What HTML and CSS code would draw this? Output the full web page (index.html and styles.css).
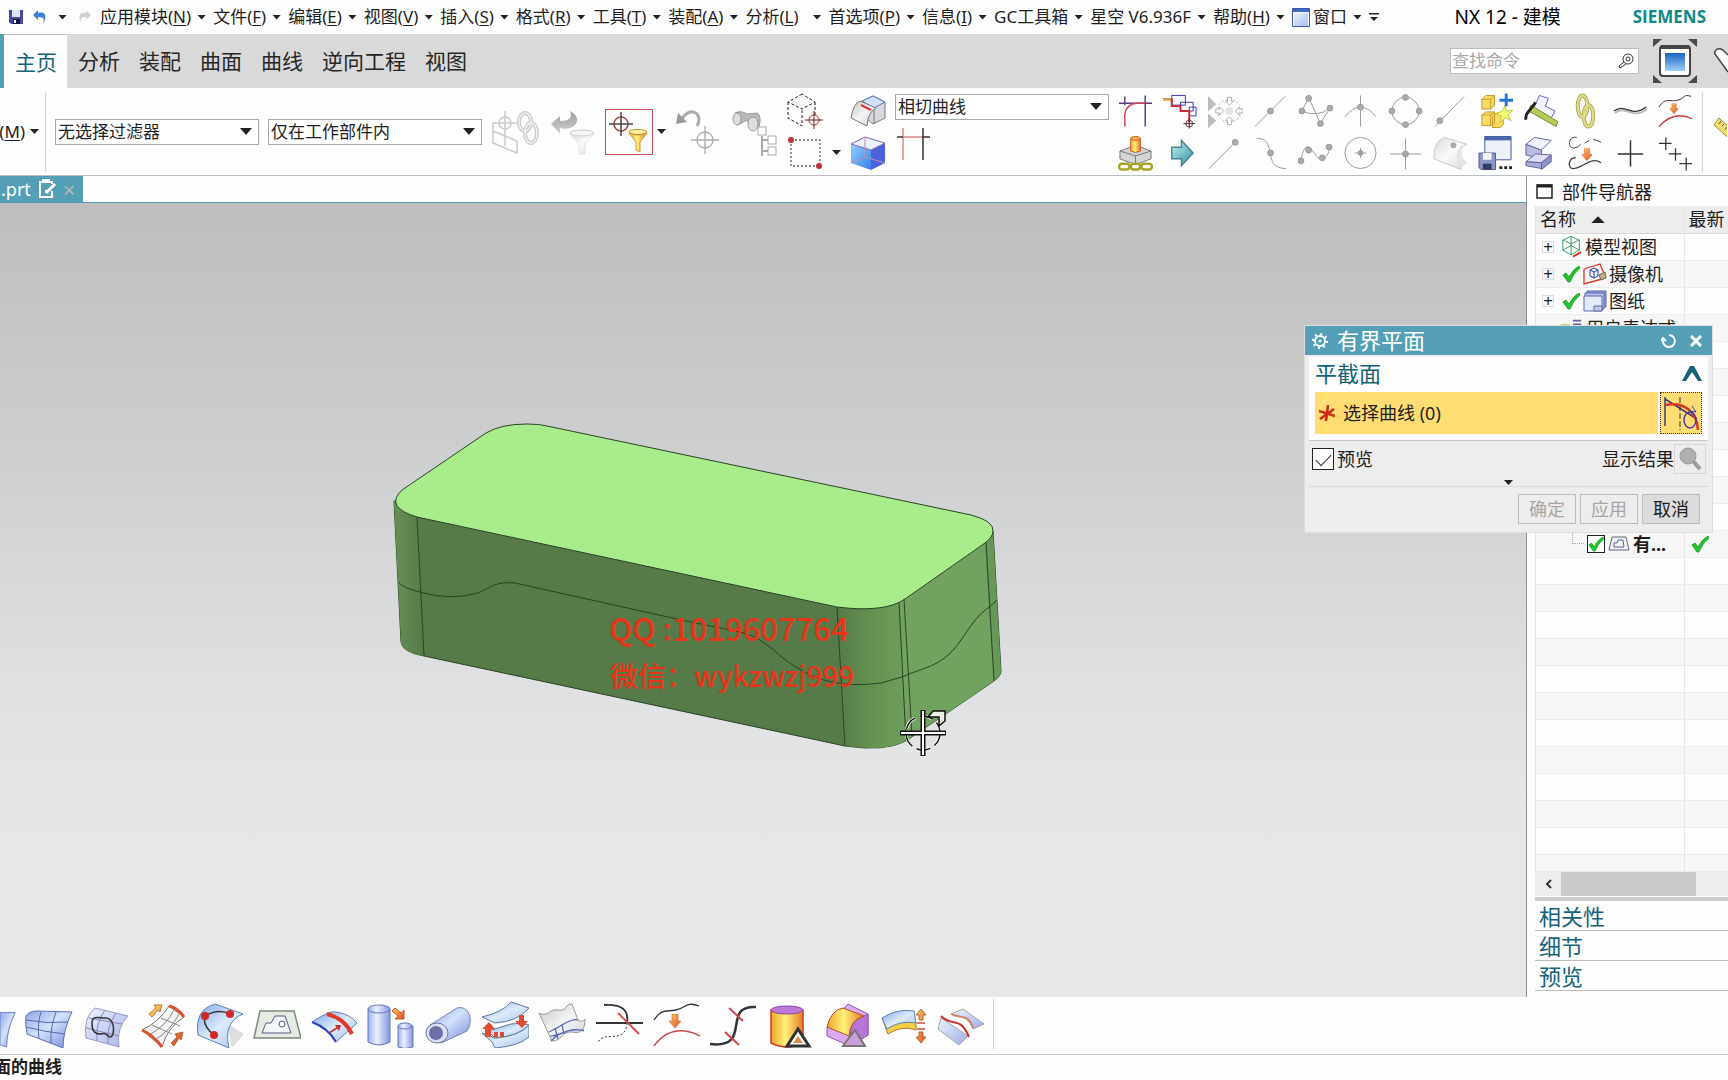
FILE: index.html
```html
<!DOCTYPE html>
<html lang="zh-CN">
<head>
<meta charset="utf-8">
<title>NX 12 - 建模</title>
<link rel="stylesheet" href="styles.css">
</head>
<body>
<svg class="defs" aria-hidden="true">
  <defs>
    <linearGradient id="blue" x1="0" y1="0" x2="1" y2="1"><stop offset="0" stop-color="#e8effd"/><stop offset="1" stop-color="#7f93e0"/></linearGradient>
    <linearGradient id="mesh" x1="0" y1="0" x2="1" y2="1"><stop offset="0" stop-color="#8fa5ea"/><stop offset=".45" stop-color="#d3e2fb"/><stop offset="1" stop-color="#7486da"/></linearGradient>
    <linearGradient id="blueH" x1="0" y1="0" x2="1" y2="0"><stop offset="0" stop-color="#9db0ea"/><stop offset=".4" stop-color="#eaf1ff"/><stop offset="1" stop-color="#8496df"/></linearGradient>
    <linearGradient id="sky" x1="0" y1="0" x2="1" y2="1"><stop offset="0" stop-color="#7fa6e8"/><stop offset=".5" stop-color="#dceafa"/><stop offset="1" stop-color="#a9c4ec"/></linearGradient>
    <linearGradient id="grey" x1="0" y1="0" x2="1" y2="1"><stop offset="0" stop-color="#c4c4c4"/><stop offset=".5" stop-color="#f4f4f4"/><stop offset="1" stop-color="#cfcfcf"/></linearGradient>
    <linearGradient id="pale" x1="0" y1="0" x2="1" y2="1"><stop offset="0" stop-color="#dcdcdc"/><stop offset=".5" stop-color="#fafafa"/><stop offset="1" stop-color="#d8d8d8"/></linearGradient>
    <linearGradient id="dark" x1="0" y1="0" x2="0" y2="1"><stop offset="0" stop-color="#9a9a9a"/><stop offset="1" stop-color="#d2d2d2"/></linearGradient>
    <linearGradient id="gold" x1="0" y1="0" x2="1" y2="0"><stop offset="0" stop-color="#f0a52c"/><stop offset=".45" stop-color="#fff27a"/><stop offset="1" stop-color="#e77a28"/></linearGradient>
    <linearGradient id="fire" x1="0" y1="0" x2="1" y2="1"><stop offset="0" stop-color="#ffd25a"/><stop offset="1" stop-color="#e0482a"/></linearGradient>
    <linearGradient id="cube" x1="0" y1="0" x2="1" y2="1"><stop offset="0" stop-color="#8fd0fb"/><stop offset="1" stop-color="#3b7fe8"/></linearGradient>
    <linearGradient id="teal" x1="0" y1="0" x2="1" y2="1"><stop offset="0" stop-color="#c2f0f0"/><stop offset="1" stop-color="#2f93a5"/></linearGradient>
    <linearGradient id="screen" x1="0" y1="0" x2="0" y2="1"><stop offset="0" stop-color="#1d62c4"/><stop offset="1" stop-color="#9ed0fa"/></linearGradient>
    <symbol id="tick" viewBox="0 0 18 18"><path d="M1 10 4 8 7 12Q11 4 17 1L18 3Q11 9 8 17H6Z" fill="#22c52e" stroke="#169a24" stroke-width=".8"/></symbol>
    <symbol id="down" viewBox="0 0 12 14"><path d="M3 0H9V7H12L6 14 0 7H3Z" fill="url(#fire)" stroke="#d85a30" stroke-width=".6"/></symbol>
  </defs>
</svg>

<header class="menubar">
  <div class="quick">
    <button aria-label="保存"><svg width="14" height="14" viewBox="0 0 14 14"><path d="M0 0H14V14H2L0 12Z" fill="#4a4a9c"/><path d="M3 0H11V7H3Z" fill="#dfe4f7"/><path d="M4 9H11V14H4Z" fill="#16163c"/><path d="M5 10H7V13H5Z" fill="#fff"/></svg></button>
    <button aria-label="撤消"><svg width="15" height="14" viewBox="0 0 15 14"><path d="M0 5 5 0V3C12 1 15 6 10 14 12 8 10 7 5 7V10Z" fill="#3f7fdc"/></svg></button>
    <i class="caret"></i>
    <button aria-label="重做"><svg width="14" height="14" viewBox="0 0 15 14"><path d="M15 5 10 0V3C3 1 0 6 5 14 3 8 5 7 10 7V10Z" fill="#d0d0d0"/></svg></button>
  </div>
  <nav class="menus">
    <button>应用模块(<u>N</u>)<i class="caret"></i></button>
    <button>文件(<u>F</u>)<i class="caret"></i></button>
    <button>编辑(<u>E</u>)<i class="caret"></i></button>
    <button>视图(<u>V</u>)<i class="caret"></i></button>
    <button>插入(<u>S</u>)<i class="caret"></i></button>
    <button>格式(<u>R</u>)<i class="caret"></i></button>
    <button>工具(<u>T</u>)<i class="caret"></i></button>
    <button>装配(<u>A</u>)<i class="caret"></i></button>
    <button class="wide">分析(<u>L</u>)<i class="caret"></i></button>
    <button>首选项(<u>P</u>)<i class="caret"></i></button>
    <button>信息(<u>I</u>)<i class="caret"></i></button>
    <button>GC工具箱<i class="caret"></i></button>
    <button>星空 V6.936F<i class="caret"></i></button>
    <button>帮助(<u>H</u>)<i class="caret"></i></button>
    <button><svg class="win" width="18" height="19" viewBox="0 0 18 19"><path d="M.5.5H17.5V18.5H.5Z" fill="#f4f8ff" stroke="#3a58a8"/><path d="M1 1H17V4H1Z" fill="#3f68c8"/><path d="M2 5H16V18H2Z" fill="url(#blue)" opacity=".6"/></svg>窗口<i class="caret"></i></button>
    <button aria-label="更多"><svg width="10" height="9" viewBox="0 0 10 9"><path d="M0 0H10V1.500H0ZM1 4H9L5 8Z" fill="#222"/></svg></button>
  </nav>
  <h1 class="app">NX 12 - 建模</h1>
  <strong class="brand">SIEMENS</strong>
</header>

<div class="tabbar">
  <nav class="tabs">
    <a class="active" href="#home">主页</a><a href="#analysis">分析</a><a href="#assembly">装配</a><a href="#surface">曲面</a><a href="#curve">曲线</a><a href="#reverse">逆向工程</a><a href="#view">视图</a>
  </nav>
  <div class="tools">
    <label class="search"><input type="text" placeholder="查找命令" aria-label="查找命令"><svg width="16" height="16" viewBox="0 0 16 16" fill="none" stroke="#333"><circle cx="10" cy="6" r="5"/><circle cx="10" cy="6" r="2"/><path d="M6 9 1 13 2 15 8 11"/></svg></label>
    <button aria-label="全屏"><svg width="44" height="44" viewBox="0 0 44 44"><path d="M0 0H9L0 8ZM44 0H35L44 8ZM0 44H9L0 36ZM44 44H35L44 36Z" fill="#4a4a4a"/><rect x="7" y="7" width="30" height="30" rx="3" fill="#fff" stroke="#444" stroke-width="2"/><path d="M8 8H36" stroke="#444" stroke-width="4"/><path d="M12 14H32V32H12Z" fill="url(#screen)"/></svg></button>
    <svg class="clipped" width="15" height="30" viewBox="0 0 15 30"><path d="M15 9 10 4C5 1 1 4 2 8L15 26" fill="#fff" stroke="#444" stroke-width="1.500"/></svg>
  </div>
</div>

<section class="ribbon">
  <button class="menu-m"><span>(<u>M</u>)</span><i class="caret"></i></button>
  <label class="pick filter"><select aria-label="选择过滤器"><option>无选择过滤器</option></select><i class="caret big"></i></label>
  <label class="pick scope"><select aria-label="选择范围"><option>仅在工作部件内</option></select><i class="caret big"></i></label>
  <button aria-label="关联选择"><svg width="48" height="48" viewBox="0 0 48 48" fill="none" stroke="#c9c9c9" stroke-width="1.500"><circle cx="14" cy="15" r="6"/><path d="M14 3V38M2 15H30M2 15V35L26 45V33L2 23"/><ellipse cx="34" cy="14" rx="6" ry="9" stroke-width="4"/><ellipse cx="40" cy="25" rx="6" ry="10" stroke-width="4"/><ellipse cx="34" cy="14" rx="6" ry="9" stroke="#f2f2f2"/><ellipse cx="40" cy="25" rx="6" ry="10" stroke="#f2f2f2"/></svg></button>
  <button aria-label="重置过滤器"><svg width="48" height="48" viewBox="0 0 48 48"><path d="M3 16 12 8V13Q26 13 22 3 34 10 26 18 20 22 12 20V26Z" fill="url(#dark)"/><ellipse cx="34" cy="25" rx="12" ry="3" fill="#f4f4f4" stroke="#ccc"/><path d="M22 26 31 36V46H37V36L46 26Q34 31 22 26Z" fill="url(#pale)" stroke="#d8d8d8" stroke-width=".6"/></svg></button>
  <div class="split">
    <button class="on" aria-label="类型过滤器"><svg width="44" height="44" viewBox="0 0 44 44"><g fill="none" stroke="#a84848" stroke-width="1.500"><circle cx="14" cy="14" r="7"/><path d="M14 2V26M2 14H26" stroke="#444"/></g><ellipse cx="31" cy="22" rx="9" ry="2.500" fill="#fff2a8" stroke="#c59020"/><path d="M22 23 29 32V40L33 42V32L40 23Q31 27 22 23Z" fill="url(#gold)" stroke="#bf8b20" stroke-width=".8"/></svg></button>
    <i class="caret"></i>
  </div>
  <button aria-label="返回"><svg width="46" height="48" viewBox="0 0 46 48" fill="none"><path d="M5 13Q15-1 22 6 26 11 22 18" stroke="#aaa" stroke-width="3"/><path d="M1 16 3 5 12 14Z" fill="#999"/><g stroke="#aaa" stroke-width="1.300"><circle cx="30" cy="32" r="8"/><path d="M30 18V46M16 32H44"/></g></svg></button>
  <button aria-label="在导航器中查找"><svg width="48" height="48" viewBox="0 0 48 48" stroke="#999"><path d="M5 5Q11 2 17 6L27 5Q32 8 29 19L22 22 17 12 8 17Z" fill="#b9b9b9"/><ellipse cx="7" cy="11" rx="4" ry="6" fill="#ddd"/><ellipse cx="23" cy="16" rx="5" ry="7" fill="#ddd"/><g fill="#fff" stroke="#aaa"><path d="M32 28V48M32 32H40M32 43H40" stroke-width="2"/><rect x="28" y="19" width="8" height="8"/><rect x="38" y="28" width="8" height="8"/><rect x="38" y="39" width="8" height="8"/></g></svg></button>
  <div class="stack stack-a">
    <button aria-label="选择体"><svg width="36" height="36" viewBox="0 0 36 36" fill="none" stroke="#222"><path d="M15 1 1 9 15 16 28 9ZM1 9V25L15 33V16M28 9V22" stroke-dasharray="3 2"/><circle cx="27" cy="27" r="5" stroke="#a33"/><path d="M27 18V36M18 27H36" stroke="#622"/></svg></button>
    <div class="split"><button aria-label="矩形选择"><svg width="36" height="36" viewBox="0 0 36 36"><path d="M4 5H33V31H4Z" fill="none" stroke="#666" stroke-width="1.400" stroke-dasharray="2 2"/><circle cx="4" cy="5" r="3" fill="#c23038"/><circle cx="32" cy="31" r="3" fill="#c23038"/></svg></button><i class="caret"></i></div>
  </div>
  <div class="stack">
    <button aria-label="面规则"><svg width="36" height="36" viewBox="0 0 36 36" stroke="#777"><path d="M10 9 23 3 35 9V25L23 31 17 26Z" fill="#d5d8dd"/><path d="M12 8 23 3 35 9 24 15Z" fill="#cfe2fa" stroke="#5878b8"/><path d="M24 15V30" fill="none"/><path d="M1 25Q3 11 10 8L26 15Q18 19 17 33Z" fill="url(#grey)"/><path d="M11 12 21 17" stroke="#d33" stroke-width="2"/></svg></button>
    <button aria-label="实体"><svg width="36" height="36" viewBox="0 0 36 36"><path d="M1 9 21 15V35L1 28Z" fill="url(#cube)"/><path d="M21 15 35 8V28L21 35Z" fill="#4c62dc"/><path d="M1 9 15 2 35 8 21 15Z" fill="#e5f2fc" stroke="#86a"/><path d="M15 2V22L35 28M1 28 15 22" fill="none" stroke="#c48ab0"/></svg></button>
  </div>
  <div class="stack stack-c">
    <label class="pick rule"><select aria-label="曲线规则"><option>相切曲线</option></select><i class="caret big"></i></label>
    <button aria-label="在相交处停止"><svg width="36" height="36" viewBox="0 0 36 36" fill="none"><path d="M8 1V33M8 10H27" stroke="#d88" stroke-width="1.500"/><path d="M28 1V33M27 10H35M2 10H8" stroke="#333" stroke-width="1.500"/></svg></button>
  </div>
  <div class="commands">
    <button aria-label="跟随圆角"><svg viewBox="0 0 36 36" fill="none"><path d="M7 12V3M28 2V34M1 10H35" stroke="#5a3c7a" stroke-width="1.500"/><path d="M7 34V22Q8 11 19 10H28" stroke="#d44050" stroke-width="1.500"/></svg></button>
    <button aria-label="曲线链"><svg viewBox="0 0 36 36" fill="none"><path d="M9 2H23V12H9ZM18 9H31V18H18ZM27 14H34V23H27Z" stroke="#3838a8"/><path d="M0 6H9V13H18V18H27V30" stroke="#c82838" stroke-width="2"/><path d="M0 6H8" stroke="#e8a030" stroke-width="2"/><circle cx="27" cy="31" r="3.500" stroke="#733"/><path d="M27 25V36M21 31H33" stroke="#333"/></svg></button>
    <button aria-label="移动"><svg viewBox="0 0 36 36" fill="#fff" stroke="#aaa"><path d="M0 3 8 11 0 18ZM0 21 8 28 0 35Z" fill="#bbb" stroke="#bbb"/><circle cx="22" cy="18" r="12" fill="none" stroke-dasharray="2 2"/><circle cx="22" cy="18" r="4" fill="#e4e4e4" stroke="none"/><path d="M22 12 26 8H24V4H20V8H18ZM22 24 26 28H24V32H20V28H18ZM16 18 12 14V16H8V20H12V22ZM28 18 32 14V16H36V20H32V22Z"/></svg></button>
    <button aria-label="中点"><svg viewBox="0 0 36 36" fill="#aaa" stroke="#999"><path d="M2 34 33 3"/><circle cx="18" cy="18" r="3"/></svg></button>
    <button aria-label="极点"><svg viewBox="0 0 36 36" fill="#aaa" stroke="#999"><path d="M4 18 11 4 23 31 33 15Q20 25 4 18" fill="none"/><circle cx="4" cy="18" r="3"/><circle cx="11" cy="5" r="3"/><circle cx="23" cy="31" r="3"/><circle cx="33" cy="15" r="3"/></svg></button>
    <button aria-label="交点"><svg viewBox="0 0 36 36" fill="#aaa" stroke="#999"><path d="M18 2V34M2 24Q18 4 34 24" fill="none"/><circle cx="18" cy="14" r="3"/></svg></button>
    <button aria-label="象限点"><svg viewBox="0 0 36 36" fill="#aaa" stroke="#999"><circle cx="18" cy="18" r="14" fill="none"/><circle cx="18" cy="4" r="3"/><circle cx="18" cy="32" r="3"/><circle cx="4" cy="18" r="3"/><circle cx="32" cy="18" r="3"/></svg></button>
    <button aria-label="线上点"><svg viewBox="0 0 36 36" fill="#aaa" stroke="#999"><path d="M2 34 32 3"/><circle cx="7" cy="28" r="3"/></svg></button>
    <button aria-label="新建组件"><svg viewBox="0 0 36 36"><g fill="#f8dc62" stroke="#c49a28"><path d="M4 6 8 2H17V12L13 16H4ZM4 22 8 19H17V30L13 33H4ZM15 24 19 20H26V32L23 35H15Z"/><path d="M4 6H13V16M13 6 17 2M4 22H13V33M13 22 17 19" fill="none"/></g><path d="M28 12 29 18 36 17 31 22 34 28 28 25 23 30 24 23 18 21 25 18Z" fill="#f2fa70" stroke="#a8b83a" stroke-width=".7"/><path d="M29 0V13M22 7H36" stroke="#2878d8" stroke-width="3"/></svg></button>
    <button aria-label="草图"><svg viewBox="0 0 36 36"><path d="M17 2 26 5 23 13 33 18 28 27 10 17Z" fill="#f3f2ff" stroke="#6262c8"/><path d="M8 12 36 29 34 34 6 18Z" fill="#b7cc58" stroke="#6d8f38"/><path d="M13 9 7 17Q2 22 3 27" stroke="#222" stroke-width="3" fill="none"/></svg></button>
    <button aria-label="链接"><svg viewBox="0 0 36 36" fill="none"><g stroke="#a09e48" stroke-width="4"><ellipse cx="15" cy="13" rx="5" ry="11"/><ellipse cx="21" cy="23" rx="5" ry="11"/></g><g stroke="#dedc88" stroke-width="2.500"><ellipse cx="15" cy="13" rx="5" ry="11"/><ellipse cx="21" cy="23" rx="5" ry="11"/></g></svg></button>
    <button aria-label="样条"><svg viewBox="0 0 36 36" fill="none"><path d="M2 20C14 11 20 28 35 16" stroke="#bbb" stroke-width="2"/><path d="M1 18C13 9 19 26 34 14" stroke="#333" stroke-width="1.300"/></svg></button>
    <button aria-label="投影曲线"><svg viewBox="0 0 36 36" fill="none"><path d="M1 14C8 3 12 9 20 7S26 0 34 3" stroke="#333"/><path d="M1 34Q16 17 35 26" stroke="#c83838" stroke-width="1.300"/><use href="#down" x="12" y="10" width="9" height="11"/></svg></button>

    <button aria-label="关联"><svg viewBox="0 0 36 36"><path d="M2 16 18 10 34 16V24L18 30 2 24Z" fill="#d4d4d4" stroke="#777"/><path d="M2 16 18 21 34 16M18 21V30" fill="none" stroke="#777"/><path d="M13 3V16Q18 19 23 16V3Z" fill="url(#gold)" stroke="#c85a20"/><ellipse cx="18" cy="3" rx="5" ry="2" fill="#fbb45a" stroke="#c85a20"/><g fill="none" stroke="#a8a428" stroke-width="2.500"><rect x="1" y="29" width="11" height="6" rx="3"/><rect x="13" y="29" width="10" height="6" rx="3"/><rect x="24" y="29" width="11" height="6" rx="3"/></g></svg></button>
    <button aria-label="下一步"><svg viewBox="0 0 36 36"><path d="M9 12H19V5L31 18 19 31V24H9Z" fill="url(#teal)" stroke="#4a8390" stroke-width="1.500"/></svg></button>
    <button aria-label="端点"><svg viewBox="0 0 36 36" fill="#aaa" stroke="#999"><path d="M1 34 27 8"/><circle cx="28" cy="7" r="3"/></svg></button>
    <button aria-label="拐点"><svg viewBox="0 0 36 36" fill="#aaa" stroke="#999"><path d="M4 3C26 2 8 34 34 34" fill="none"/><circle cx="18" cy="18" r="3"/></svg></button>
    <button aria-label="控制点"><svg viewBox="0 0 36 36" fill="#aaa" stroke="#999"><path d="M3 26C7 2 14 14 18 20S30 26 33 12" fill="none"/><circle cx="3" cy="26" r="3"/><circle cx="11" cy="15" r="3"/><circle cx="25" cy="23" r="3"/><circle cx="32" cy="12" r="3"/></svg></button>
    <button aria-label="圆心"><svg viewBox="0 0 36 36" fill="#aaa" stroke="#999"><circle cx="18" cy="18" r="16" fill="none"/><circle cx="18" cy="18" r="2.500"/><path d="M18 13V23M12 18H24"/></svg></button>
    <button aria-label="现有点"><svg viewBox="0 0 36 36" fill="#aaa" stroke="#999"><path d="M18 3V35M2 19H34"/><circle cx="18" cy="19" r="3"/></svg></button>
    <button aria-label="面上的点"><svg viewBox="0 0 36 36"><path d="M1 24Q0 6 12 2L35 9Q20 13 29 35Z" fill="url(#pale)" stroke="#c8c8c8"/><path d="M35 9Q24 18 35 28L29 34Q20 17 35 9Z" fill="#e6e6e6"/><circle cx="21" cy="10" r="3" fill="#aaa"/></svg></button>
    <button aria-label="另存为"><svg viewBox="0 0 36 36"><path d="M7 1H34V25H7Z" fill="#eef1fa" stroke="#35589e"/><path d="M7 1H34V5H7Z" fill="#4868a8"/><path d="M1 18H18V35H3L1 33Z" fill="#8b98c8" stroke="#4e5c90"/><path d="M5 18H14V25H5Z" fill="#f3f3f3"/><path d="M5 29H14V35H5Z" fill="#333d60"/><path d="M22 33H25M27 33H30M32 33H35" stroke="#222" stroke-width="3"/></svg></button>
    <button aria-label="基准平面"><svg viewBox="0 0 36 36"><g stroke="#63639e"><path d="M3 9 19 15V24L3 20Z" fill="#b9bbe0"/><path d="M3 9 12 2 29 5 19 15Z" fill="#f0f0ff"/><path d="M3 27 13 19 29 20 19 28Z" fill="#dedff7"/><path d="M3 27 19 28V34L3 31Z" fill="#a8acd8"/><path d="M19 28 29 20V27L19 35Z" fill="#8e92c8"/></g></svg></button>
    <button aria-label="偏置曲线"><svg viewBox="0 0 36 36" fill="none" stroke="#444"><path d="M9 2C0 0-1 13 6 13Q10 13 13 9M17 8 22 5M26 4Q30 5 34 7"/><path d="M8 23C0 22-1 35 6 34 16 33 24 21 34 28" stroke-width="1.400"/><use href="#down" x="14" y="13" width="11" height="13"/></svg></button>
    <button aria-label="点"><svg viewBox="0 0 36 36"><path d="M18 5V32M5 19H31" stroke="#333" stroke-width="1.500"/></svg></button>
    <button aria-label="点集"><svg viewBox="0 0 36 36"><path d="M8 2V15M1 8H14M18 13V26M11 19H24M29 23V36M22 29H35" stroke="#333" stroke-width="1.300"/></svg></button>
  </div>
  <div class="measure"><svg width="16" height="48" viewBox="0 0 16 48"><path d="M3 17 8 10 30 30 24 36Z" fill="#f3df75" stroke="#a08838"/><path d="M8 16 10 13M11 18 13 16M14 22 16 19" stroke="#555"/></svg></div>
</section>

<main class="work">
  <section class="stage">
    <div class="docs">
      <button class="doc">.prt<svg width="18" height="20" viewBox="0 0 18 20" fill="none" stroke="#fff" stroke-width="2"><path d="M14 12V18H2V3H14V5M5 3V1H11V3"/><path d="M8 14 17 5M8 14 9 11" stroke-width="3"/></svg><span class="x">×</span></button>
    </div>
    <div class="viewport">
      <svg viewBox="0 203 1526 794" preserveAspectRatio="xMidYMid meet">
        <defs>
          <linearGradient id="corner" x1="837" y1="0" x2="906" y2="0" gradientUnits="userSpaceOnUse"><stop offset="0" stop-color="#567a48"/><stop offset=".5" stop-color="#659150"/><stop offset="1" stop-color="#6f9f5d"/></linearGradient>
          <linearGradient id="left" x1="394" y1="0" x2="424" y2="0" gradientUnits="userSpaceOnUse"><stop offset="0" stop-color="#669056"/><stop offset="1" stop-color="#567a48"/></linearGradient>
        </defs>
        <g stroke="#2c4424" stroke-width="1">
          <path d="M394 501 401 642Q402 652 424 656L845 746Q885 752 906 741L994 681Q1001 676 1001 671L993 531Z" fill="#567a48"/>
          <path d="M394 501 401 642Q402 652 424 656L417 517Z" fill="url(#left)" stroke="none"/>
          <path d="M837 607 845 746Q885 752 906 741L899 600Z" fill="url(#corner)" stroke="none"/>
          <path d="M899 598 906 741 994 681 985 542Z" fill="#72a25f" stroke="none"/>
          <path d="M985 542 994 681Q1001 676 1001 671L993 531Z" fill="#699659" stroke="none"/>
          <path d="M402 490 486 433Q501 424 527 424 540 424 547 426L971 515Q994 521 993 531 993 537 985 543L905 599Q885 613 837 607L417 517Q384 507 402 490Z" fill="#a9ec8c"/>
          <path d="M417 517 424 656M837 607 845 746M899 602 906 741M904 599 912 736M986 542 994 681" fill="none"/>
          <path d="M398 582C404 588 412 590 420 592Q450 601 478 593C490 588 495 581 515 583L686 621 735 631C765 636 775 655 796 667Q830 690 881 683L902 677C925 667 930 669 947 656 963 643 970 620 988 608Q992 605 997 600" fill="none"/>
        </g>
        <g class="watermark">
          <text class="qq" x="609" y="641">QQ :1019607764</text>
          <text x="610" y="687">微信：wykzwzj999</text>
        </g>
        <g fill="none">
          <circle cx="923" cy="733" r="17" stroke="#fff" stroke-width="3" stroke-dasharray="14 5"/>
          <circle cx="923" cy="733" r="17" stroke="#111" stroke-width="1.500" stroke-dasharray="14 5"/>
          <path d="M923 710V756M900 733H946" stroke="#111" stroke-width="5"/>
          <path d="M923 711V755M901 733H945" stroke="#fff" stroke-width="2"/>
          <path d="M928 717 933 711H945V721L939 726V717Z" fill="#e8efe4" stroke="#111" stroke-width="1.500"/>
        </g>
      </svg>
    </div>
  </section>

  <aside class="navigator">
    <h2><svg width="17" height="15" viewBox="0 0 17 15"><path d="M1 1H16V14H1Z" fill="none" stroke="#222" stroke-width="1.500"/><path d="M1 2H16" stroke="#222" stroke-width="3"/></svg>部件导航器</h2>
    <div class="tree">
      <table>
        <colgroup><col class="c-name"><col></colgroup>
        <thead><tr><th>名称<i class="sort"></i></th><th>最新</th></tr></thead>
        <tbody>
          <tr><td><div class="node"><span class="plus">+</span><svg width="22" height="23" viewBox="0 0 24 24" fill="none" stroke="#2a9a5c"><path d="M2 5 11 1 20 5V16L11 21 2 16ZM2 5 11 9 20 5M11 1V21M2 16 11 11 20 16"/><path d="M13 23 22 18" stroke="#e02818" stroke-width="2"/></svg>模型视图</div></td><td></td></tr>
          <tr><td><div class="node"><span class="plus">+</span><svg class="chk" width="18" height="18"><use href="#tick"/></svg><svg width="24" height="22" viewBox="0 0 24 22" fill="none"><path d="M1 6 17 1 22 13M1 6V21L19 16" stroke="#d83828" stroke-width="1.300"/><path d="M7 7 11 5 15 7V13L11 15 7 13ZM7 7 11 9 15 7M11 9V15" stroke="#2838a8"/><path d="M16 12 22 9 23 15 18 17Z" fill="#c8b080" stroke="#665"/></svg>摄像机</div></td><td></td></tr>
          <tr><td><div class="node"><span class="plus">+</span><svg class="chk" width="18" height="18"><use href="#tick"/></svg><svg width="24" height="22" viewBox="0 0 24 22" stroke="#5868a8"><path d="M4 1H23V17H4Z" fill="#93a3d8"/><path d="M2 3H21V19H2Z" fill="#b8c4ee"/><path d="M1 6H19V21H1Z" fill="#e4eafb"/><path d="M11 16H19V21H11Z" fill="#c4cae0"/></svg>图纸</div></td><td></td></tr>
          <tr><td><div class="node"><span class="plus none"></span><svg width="23" height="22" viewBox="0 0 25 22" fill="none"><path d="M1 20V8H9L11 11H17V20Z" stroke="#d0b020" stroke-width="2"/><path d="M13 3H22M13 7H22" stroke="#6a5aa8" stroke-width="2"/></svg>用户表达式</div></td><td></td></tr>
          <tr><td></td><td></td></tr><tr><td></td><td></td></tr><tr><td></td><td></td></tr><tr><td></td><td></td></tr><tr><td></td><td></td></tr><tr><td></td><td></td></tr><tr><td></td><td></td></tr>
          <tr><td><div class="node leaf"><span class="twig"></span><span class="box"><svg width="16" height="16"><use href="#tick"/></svg></span><svg width="22" height="15" viewBox="0 0 22 15" fill="#f0f4f0" stroke="#667"><path d="M4 1H18L21 14H1Z"/><path d="M6 11V7H9L10 4H15L16 11Z" stroke="#5560a8"/></svg><b>有...</b></div></td><td><svg class="late" width="18" height="18"><use href="#tick"/></svg></td></tr>
          <tr><td></td><td></td></tr><tr><td></td><td></td></tr><tr><td></td><td></td></tr><tr><td></td><td></td></tr><tr><td></td><td></td></tr><tr><td></td><td></td></tr><tr><td></td><td></td></tr><tr><td></td><td></td></tr><tr><td></td><td></td></tr><tr><td></td><td></td></tr><tr><td></td><td></td></tr><tr><td></td><td></td></tr>
        </tbody>
      </table>
    </div>
    <div class="hscroll"><button aria-label="向左滚动"><svg width="7" height="10" viewBox="0 0 7 10"><path d="M6 1 2 5 6 9" fill="none" stroke="#333" stroke-width="2"/></svg></button><span class="thumb"></span></div>
    <div class="panels"><button>相关性</button><button>细节</button><button>预览</button></div>
  </aside>

  <form class="dialog" aria-label="有界平面">
    <header>
      <svg width="16" height="16" viewBox="0 0 16 16" fill="none" stroke="#fff"><circle cx="8" cy="8" r="5" stroke-width="2"/><circle cx="8" cy="8" r="7" stroke-width="2" stroke-dasharray="2 3.500"/><circle cx="8" cy="8" r="1" fill="#fff"/></svg>
      <h3>有界平面</h3>
      <button type="button" aria-label="重置"><svg width="15" height="15" viewBox="0 0 15 15" fill="none" stroke="#fff" stroke-width="2"><path d="M8 2A6 6 0 1 1 2 7"/><path d="M0 8 2 5 5 8"/></svg></button>
      <button type="button" aria-label="关闭"><svg width="12" height="12" viewBox="0 0 12 12"><path d="M1 1 11 11M11 1 1 11" stroke="#fff" stroke-width="3"/></svg></button>
    </header>
    <fieldset>
      <div class="group"><span>平截面</span><svg width="20" height="16" viewBox="0 0 20 16"><path d="M0 16H4L10 7 16 16H20L12 1H8Z" fill="#14637a"/></svg></div>
      <div class="pickrow">
        <span class="field"><svg width="16" height="16" viewBox="0 0 16 16"><path d="M9 0 7 16M0 6 16 11M15 4 1 14" stroke="#d02818" stroke-width="2.500"/></svg>选择曲线 (0)</span>
        <button type="button" aria-label="曲线"><svg width="38" height="38" viewBox="0 0 38 38" fill="none"><path d="M3 3V32M3 5 35 25" stroke="#3a3a7a" stroke-width="1.500"/><path d="M18 3V36" stroke="#333" stroke-dasharray="6 2"/><path d="M3 11C22 7 35 18 36 36" stroke="#d83820" stroke-width="2.500"/><ellipse cx="28" cy="26" rx="6" ry="8" stroke="#4a3aa0" stroke-width="1.500"/><path d="M30 12 34 18 27 17" stroke="#4a3aa0"/></svg></button>
      </div>
    </fieldset>
    <div class="preview">
      <label><input type="checkbox" checked>预览</label>
      <span>显示结果</span><button type="button" aria-label="显示结果"><svg width="24" height="24" viewBox="0 0 24 24"><circle cx="10" cy="9" r="8" fill="#b0b0b0" stroke="#999"/><path d="M15 14 22 22" stroke="#999" stroke-width="4"/></svg></button>
    </div>
    <div class="more"><i class="caret"></i></div>
    <footer><button type="button" disabled>确定</button><button type="button" disabled>应用</button><button type="button" class="cancel">取消</button></footer>
  </form>
</main>

<section class="surfaces">
  <button class="cut" aria-label="曲面"><svg width="21" height="48" viewBox="0 0 21 48"><path d="M0 12H16Q7 30 7 48L0 46Z" fill="url(#mesh)" stroke="#6c7cc4"/></svg></button>
  <button aria-label="通过曲线网格"><svg viewBox="0 0 48 48"><path d="M1 16Q4 11 12 11L47 12Q38 30 38 48L2 34Q0 24 1 16Z" fill="url(#mesh)" stroke="#6070b0"/><path d="M1 20Q22 24 43 22M1 27Q20 32 40 34M16 12Q12 24 14 39M31 12Q25 28 26 43" fill="none" stroke="#5868a8"/></svg></button>
  <button aria-label="修剪片体"><svg viewBox="0 0 48 48"><path d="M4 38Q1 18 13 8L46 16Q34 28 37 47Z" fill="url(#blue)" stroke="#776fac" opacity=".7"/><path d="M7 18 40 24M4 28 37 36M23 10Q13 24 15 41M34 13Q24 28 26 44" fill="none" stroke="#8a85b5"/><path d="M10 23C10 15 18 18 22 18 32 17 33 30 30 36 26 40 26 31 19 34 11 34 10 29 10 23Z" fill="none" stroke="#333" stroke-width="1.500"/></svg></button>
  <button aria-label="通过曲线组"><svg viewBox="0 0 48 48"><path d="M3 30Q20 22 30 6L45 17Q28 28 23 47Z" fill="#f4f4f2" stroke="#777"/><path d="M10 35Q27 26 35 10M16 40Q32 30 40 14M13 25 33 34M22 18 41 26" fill="none" stroke="#888"/><path d="M3 30Q15 36 23 47M30 6Q39 8 45 17" fill="none" stroke="#e05030" stroke-width="3"/><path d="M10 14 17 8 15 5 23 5 21 12 19 10 13 17ZM32 43 38 37 36 34 44 32 42 40 40 38 35 46Z" fill="url(#fire)" stroke="#a05a20" stroke-width=".8"/></svg></button>
  <button aria-label="填充曲面"><svg viewBox="0 0 48 48"><path d="M35 45 32 24 48 34 37 47Z" fill="#ddd"/><path d="M2 35Q-2 10 19 4L47 14Q27 22 33 48Z" fill="url(#sky)" stroke="#5c83b8"/><path d="M9 16Q22 8 34 14M9 16Q6 25 18 35" fill="none" stroke="#333" stroke-width="1.500"/><circle cx="9" cy="16" r="4" fill="#d02828"/><circle cx="34" cy="14" r="4" fill="#d02828"/><circle cx="18" cy="35" r="4" fill="#d02828"/></svg></button>
  <button aria-label="有界平面"><svg viewBox="0 0 48 48"><path d="M7 11H41L48 38H1Z" fill="#e4ece4" stroke="#7c887c" stroke-width="1.500"/><path d="M9 33 13 23H18L22 16H32L38 33Z" fill="#f3f5f8" stroke="#555a80"/><circle cx="29" cy="24" r="3" fill="none" stroke="#555a80"/></svg></button>
  <button aria-label="规律延伸"><svg viewBox="0 0 48 48"><path d="M2 22Q20 10 26 12 40 14 47 23L26 42Q18 28 2 22Z" fill="url(#sky)" stroke="#6a7fae"/><path d="M2 22Q18 28 26 42" fill="none" stroke="#2c3fc0" stroke-width="2"/><path d="M17 14Q34 18 42 34" fill="none" stroke="#e03828" stroke-width="4"/><path d="M19 33 30 26" stroke="#c83030" stroke-width="1.500"/><path d="M25 25 31 25 29 31Z" fill="#c83030"/></svg></button>
  <button aria-label="缩放体"><svg viewBox="0 0 48 48"><g fill="url(#blueH)" stroke="#6874b4"><path d="M1 9V42Q12 48 23 42V9Z"/><ellipse cx="12" cy="9" rx="11" ry="4"/><path d="M31 26V47Q38 50 46 47V26Z"/><ellipse cx="38" cy="26" rx="7" ry="3"/></g><path d="M25 11 28 8 34 13 37 10V19H28L31 16Z" fill="url(#fire)" stroke="#d05a28"/></svg></button>
  <button aria-label="管道"><svg viewBox="0 0 48 48"><path d="M6 25 33 8C45 5 50 20 43 31L17 43Z" fill="url(#mesh)" stroke="#7884b4"/><ellipse cx="13" cy="33" rx="11" ry="10" fill="#dce2f4" stroke="#6874a4"/><ellipse cx="12" cy="33" rx="7" ry="7" fill="#6e6ea8"/></svg></button>
  <button aria-label="替换面"><svg viewBox="0 0 48 48"><g stroke="#5f7896" fill="url(#sky)"><path d="M1 17Q22 12 30 2L48 8Q36 22 14 23Z"/><path d="M1 33 14 38Q38 36 48 25V37Q38 46 14 48L11 42Z"/><path d="M7 31 30 24Q40 22 48 25 38 36 14 38Z"/></g><path d="M8 22 14 29H10V33H4V29H1ZM38 15V21H34L41 28 47 21H43V15ZM13 32H17V37H13ZM19 32H23V37H19ZM4 33H10V37H4Z" fill="#df4a32"/></svg></button>
  <button aria-label="拟合曲面"><svg viewBox="0 0 48 48"><path d="M1 13C9 18 12 8 20 10S28 3 34 4L40 20Q44 23 47 19C47 34 39 33 34 32 24 31 24 41 14 41Z" fill="url(#grey)" stroke="#999"/><path d="M11 32C22 27 32 18 40 20M12 36C24 36 31 26 46 31M17 28 20 39M24 25 26 34M13 41Q24 28 46 30" fill="none" stroke="#5264bb" stroke-width="1.200"/></svg></button>
  <button aria-label="修剪曲线"><svg viewBox="0 0 48 48" fill="none" stroke="#333"><path d="M1 23H48M9 5C27 4 34 10 32 23" stroke-width="1.800"/><path d="M32 23C30 46 8 29 3 43" stroke-dasharray="2 2"/><path d="M23 13 44 34" stroke="#d34646" stroke-width="1.800"/></svg></button>
  <button aria-label="投影"><svg viewBox="0 0 48 48" fill="none"><path d="M2 20C10 8 14 12 24 10S34 1 47 6" stroke="#333" stroke-width="1.300"/><path d="M2 46Q20 22 48 36" stroke="#c94848" stroke-width="1.500"/><use href="#down" x="17" y="14" width="12" height="14"/></svg></button>
  <button aria-label="桥接曲线"><svg viewBox="0 0 48 48" fill="none"><path d="M1 44C45 49 11 5 47 7" stroke="#333" stroke-width="2.500"/><path d="M20 8 34 21M16 32 30 45" stroke="#d34646" stroke-width="2"/></svg></button>
  <button aria-label="圆柱"><svg viewBox="0 0 48 48"><path d="M5 10V43Q21 51 37 43V10Z" fill="url(#gold)" stroke="#cf3e20" stroke-width="1.500"/><ellipse cx="21" cy="10" rx="16" ry="4" fill="#bd78d8" stroke="#8547a4"/><path d="M32 29 43 46H21Z" fill="#fff" stroke="#333" stroke-width="3"/><path d="M32 36 37 43H27Z" fill="#dc8d50"/></svg></button>
  <button aria-label="面圆角"><svg viewBox="0 0 48 48"><path d="M4 27 25 4 45 14V35L27 46 4 36Z" fill="#dca8f0" stroke="#8e58b0"/><path d="M41 16 45 14V35L28 45Q24 20 41 16Z" fill="#b875d6" stroke="#8e58b0"/><path d="M4 27Q8 10 20 8L41 16Q27 20 26 36Z" fill="url(#gold)" stroke="#bd4b22"/><path d="M32 30 42 46H20Z" fill="#c9a0db" stroke="#777" stroke-width="2"/></svg></button>
  <button aria-label="加厚"><svg viewBox="0 0 48 48"><path d="M2 18 8 34Q22 25 36 30V22Q20 18 8 28Z" fill="#f2cd45" stroke="#a8812b"/><path d="M2 18Q18 8 34 11L36 23Q20 20 7 29Z" fill="url(#sky)" stroke="#5f83b4"/><path d="M41 9 46 15H43V20H39V15H36ZM41 43 46 37H43V32H39V37H36Z" fill="url(#fire)" stroke="#b56b28"/><path d="M37 23H45M37 29H45" stroke="#d34646" stroke-width="1.500"/></svg></button>
  <button aria-label="缝合"><svg viewBox="0 0 48 48"><g fill="url(#blue)" stroke="#888" opacity=".75"><path d="M14 14 26 9 47 24 36 29Q32 16 14 14Z"/><path d="M4 18 31 36 22 45 1 29Z"/></g><path d="M4 16C16 28 23 15 32 37" fill="none" stroke="#ce3030" stroke-width="2"/><path d="M14 14C24 20 31 12 36 28" fill="none" stroke="#d97850" stroke-width="1.500"/></svg></button>
</section>
<footer class="status">面的曲线</footer>
</body>
</html>
```
FILE: styles.css
```css
* { box-sizing: border-box; }
body {
  margin: 0;
  height: 100vh;
  display: flex;
  flex-direction: column;
  overflow: hidden;
  background: #fdfdfd;
  color: #1e1e1e;
  font: 17px/24px "Noto Sans", "Noto Sans CJK SC", sans-serif;
}
button {
  margin: 0;
  padding: 0;
  border: 0;
  background: none;
  color: inherit;
  font: inherit;
  white-space: nowrap;
}
svg { display: block; flex: none; }
.defs { position: absolute; width: 0; height: 0; }
u { text-underline-offset: 2px; text-decoration-thickness: 1px; }

.caret {
  display: inline-block;
  flex: none;
  width: 9px;
  height: 5px;
  background: #222;
  clip-path: polygon(0 0, 100% 0, 50% 100%);
}
.caret.big { width: 12px; height: 7px; }

/* Menu bar */
.menubar {
  display: flex;
  align-items: center;
  flex: none;
  height: 34px;
  padding-left: 9px;
}
.quick { display: flex; align-items: center; gap: 10px; width: 91px; }
.menus { display: flex; align-items: center; flex: 1; gap: 7px; }
.menus button { display: flex; align-items: center; white-space: pre; }
.menus .caret { margin-left: 6px; }
.menus .wide .caret { margin-left: 14px; }
.menus .win { margin-right: 3px; }
.app { margin: 0 72px 0 0; color: #000; font-size: 19px; font-weight: 400; }
.brand { margin-right: 22px; color: #0e8a86; font: 700 17px/24px "Open Sans", "Noto Sans", sans-serif; }

/* Ribbon tabs */
.tabbar {
  display: flex;
  justify-content: space-between;
  flex: none;
  height: 54px;
  background: #d9d9d9;
  border-left: 4px solid #549fb6;
}
.tabs { display: flex; }
.tabs a {
  display: flex;
  align-items: center;
  padding: 0 9px 0 10px;
  color: #262626;
  font-size: 21px;
  text-decoration: none;
}
.tabs .active { margin-right: 1px; padding: 0 10px 0 11px; background: #fdfdfd; color: #14637a; border-top: 1px solid #bbb; }
.tools { display: flex; align-items: center; }
.search {
  display: flex;
  align-items: center;
  width: 189px;
  height: 26px;
  margin-right: 14px;
  padding: 0 4px 0 1px;
  background: #fff;
  border: 1px solid #bdbdbd;
}
.search input { flex: 1; min-width: 0; padding: 0; border: 0; outline: 0; background: none; font: inherit; }
.search input::placeholder { color: #a8a8a8; opacity: 1; }
.clipped { margin-left: 16px; }

/* Ribbon */
.ribbon {
  display: flex;
  align-items: center;
  flex: none;
  gap: 9px;
  height: 88px;
  border-bottom: 1px solid #b9bec4;
  overflow: hidden;
}
.ribbon > * { flex: none; }
.menu-m {
  display: flex;
  align-items: center;
  justify-content: flex-end;
  gap: 5px;
  width: 46px;
  height: 80px;
  padding-right: 6px;
  border-right: 1px solid #d2d2d2;
}
.pick { display: flex; align-items: center; position: relative; }
.pick select {
  appearance: none;
  width: 100%;
  height: 26px;
  padding: 0 2px;
  border: 1px solid #a8a8a8;
  border-radius: 0;
  background: #fff;
  color: inherit;
  font: inherit;
}
.pick .caret { position: absolute; right: 7px; }
.filter { width: 204px; }
.scope, .rule { width: 214px; }
.split { display: flex; align-items: center; gap: 4px; }
.on { padding: 0 1px; border: 1px solid #c84c54; }
.stack { display: flex; flex-direction: column; gap: 6px; height: 78px; }
.stack > * { height: 36px; }
.stack-a { width: 54px; }
.stack-a .split { gap: 9px; }
.stack .rule { height: 28px; }
.commands {
  display: grid;
  grid-template-columns: repeat(13, 35px);
  gap: 6px 10px;
}
.commands svg { width: 35px; height: 36px; }
.measure { display: flex; align-items: center; height: 80px; padding-left: 8px; border-left: 1px solid #d2d2d2; }

/* Work area */
.work { position: relative; display: grid; grid-template-columns: 1fr 202px; flex: 1; min-height: 0; }
.stage { display: flex; flex-direction: column; min-width: 0; min-height: 0; }
.docs { flex: none; height: 27px; border-bottom: 1px solid #549fb6; }
.doc {
  display: flex;
  align-items: center;
  gap: 7px;
  width: 83px;
  height: 27px;
  padding: 0 0 2px 1px;
  background: #549fb6;
  color: #fff;
  font-size: 18px;
}
.doc .x { color: #b0b8bc; font-size: 22px; }
.viewport {
  flex: 1;
  min-height: 0;
  background: linear-gradient(#bebebe, #cacbcb 25%, #d3d5d6 42%, #dfe1e3 62%, #e4e6e8 75%, #e6e7e9);
}
.viewport svg { width: 100%; height: 100%; }
.watermark { fill: #e8351a; font: 500 28px/32px "Noto Sans CJK SC", sans-serif; }
.watermark .qq { font-size: 31px; }

/* Part navigator */
.navigator {
  display: flex;
  flex-direction: column;
  min-height: 0;
  padding: 0 0 6px 8px;
  border-left: 1px solid #8a9299;
  overflow: hidden;
  font-size: 18px;
}
.navigator h2 {
  display: flex;
  align-items: center;
  flex: none;
  gap: 9px;
  height: 30px;
  margin: 0;
  padding: 1px 0 0 1px;
  font-size: 18px;
  font-weight: 400;
}
.tree { flex: 1; min-height: 0; overflow: hidden; border-left: 1px solid #e4e4e4; }
.tree table { width: 100%; table-layout: fixed; border-collapse: collapse; }
.c-name { width: 148px; }
.tree th, .tree td {
  height: 27px;
  padding: 0;
  border-bottom: 1px solid #ececec;
  overflow: hidden;
  line-height: 26px;
  white-space: nowrap;
}
.tree th { padding-left: 4px; background: #ededed; font-weight: 400; text-align: left; border-bottom-color: #d8d8d8; }
.tree th + th, .tree td + td { border-left: 1px solid #e6e6e6; }
.tree tbody tr:nth-child(even) { background: #f7f7f7; }
.sort { display: inline-block; width: 14px; height: 7px; margin-left: 15px; background: #222; clip-path: polygon(50% 0, 100% 100%, 0 100%); vertical-align: 3px; }
.node { display: flex; align-items: center; height: 26px; padding-left: 6px; gap: 2px; }
.plus { width: 12px; height: 12px; margin-right: 5px; border: 1px solid #ddd; font-size: 17px; line-height: 10px; text-align: center; }
.plus.none { border-color: transparent; }
.chk { margin: 0 1px; }
.leaf { padding-left: 36px; gap: 3px; }
.twig { width: 12px; height: 13px; border: dotted #aaa; border-width: 0 0 1px 1px; margin-bottom: 13px; }
.box { border: 1px solid #222; background: #fff; }
.late { margin-left: 6px; }
.hscroll { display: flex; align-items: center; flex: none; height: 25px; background: #ededed; }
.hscroll button { display: flex; justify-content: center; width: 26px; }
.thumb { width: 135px; height: 24px; background: #c9c9c9; }
.panels { flex: none; margin-top: 1px; border-top: 4px solid #cfcfcf; }
.panels button {
  display: block;
  width: 100%;
  height: 30px;
  padding-left: 4px;
  border-bottom: 1px solid #bdbdbd;
  color: #14637a;
  font-size: 22px;
  line-height: 28px;
  text-align: left;
}

/* Floating dialog */
.dialog {
  position: absolute;
  top: 149px;
  right: 15px;
  width: 409px;
  background: #ededed;
  border: 1px solid #dedede;
  font-size: 18px;
}
.dialog header {
  display: flex;
  align-items: center;
  gap: 14px;
  height: 29px;
  padding: 0 10px 0 7px;
  background: #549fb6;
  color: #fff;
}
.dialog h3 { flex: 1; margin: 0 0 0 -5px; padding-bottom: 2px; font-size: 22px; font-weight: 400; line-height: 26px; }
.dialog fieldset { margin: 2px 4px 0; padding: 0 6px 6px; border: 0; border-bottom: 1px solid #c8c8c8; background: #fdfdfd; }
.group { display: flex; align-items: center; justify-content: space-between; height: 35px; padding-bottom: 4px; color: #14637a; font-size: 22px; }
.pickrow { display: flex; gap: 2px; height: 42px; }
.field { display: flex; align-items: center; flex: 1; gap: 8px; padding-left: 4px; background: #ffdd73; }
.pickrow button { padding: 1px; background: #ffdd73; border: 1px dotted #333; }
.preview { display: flex; align-items: center; height: 36px; padding: 0 6px 0 7px; }
.preview label { display: flex; align-items: center; flex: 1; gap: 3px; }
.preview input { appearance: none; width: 22px; height: 22px; margin: 0; padding: 5px 3px; border: 1px solid #222; background: #fff; }
.preview input:checked::before {
  content: "";
  display: block;
  width: 14px;
  height: 7px;
  border: solid #333;
  border-width: 0 0 1px 1px;
  transform: rotate(-45deg);
}
.preview button { padding: 2px 3px; border: 1px solid #d8d8d8; }
.more { display: flex; justify-content: center; height: 10px; margin: 0 4px; padding-top: 3px; border-bottom: 1px solid #d9d9d9; }
.dialog footer { display: flex; justify-content: flex-end; gap: 4px; padding: 7px 12px 8px 0; }
.dialog footer button { width: 58px; height: 30px; border: 1px solid #bcbcbc; }
.dialog footer button:disabled { color: #a6a6a6; }
.dialog footer .cancel { background: #dcdcdc; }

/* Surface toolbar and status line */
.surfaces { display: flex; align-items: center; flex: none; height: 58px; padding-bottom: 3px; border-bottom: 1px solid #c9c9c9; }
.surfaces button { flex: none; width: 57px; padding: 0 5px; }
.surfaces svg { width: 48px; height: 48px; }
.surfaces .cut { width: 20px; padding: 0; }
.surfaces .cut svg { width: 20px; }
.surfaces::after { content: ""; width: 1px; height: 50px; margin-left: 4px; background: #cfcfcf; }
.status { flex: none; height: 25px; text-indent: -6px; font-weight: 700; }
```
